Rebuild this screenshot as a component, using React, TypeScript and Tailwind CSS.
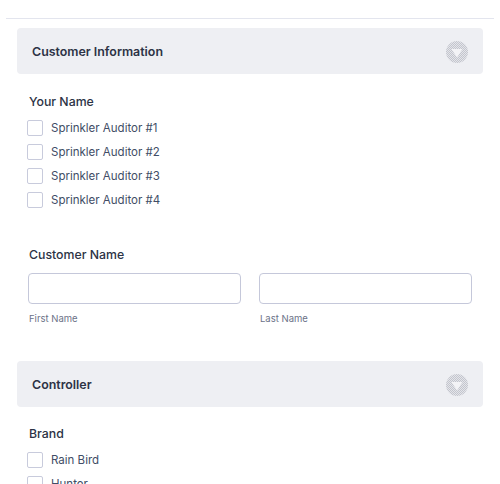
import { useState } from 'react';

function CollapseIcon() {
  return (
    <svg width="22" height="22" viewBox="0 0 22 22" className="shrink-0">
      <defs>
        <pattern id="dots" width="2" height="2" patternUnits="userSpaceOnUse">
          <rect width="2" height="2" fill="#e4e5ea" />
          <rect width="1" height="1" fill="#c3c5cd" />
          <rect x="1" y="1" width="1" height="1" fill="#c3c5cd" />
        </pattern>
      </defs>
      <circle cx="11" cy="11" r="11" fill="url(#dots)" />
      <path d="M5.5 8h11L11 16.5z" fill="#f3f3f6" />
    </svg>
  );
}

function SectionHeader({ title }: { title: string }) {
  return (
    <div className="flex h-[46px] items-center justify-between rounded-[4px] bg-[#eeeff3] pl-[15px] pr-[15px] pt-[2px]">
      <span className="text-[12.4px] font-semibold text-[#2c3345]">{title}</span>
      <CollapseIcon />
    </div>
  );
}

function CheckRow({ label }: { label: string }) {
  const [checked, setChecked] = useState(false);
  return (
    <label className="flex h-6 items-center gap-[8px]">
      <input
        type="checkbox"
        checked={checked}
        onChange={() => setChecked(!checked)}
        className="h-[16px] w-[16px] appearance-none rounded-[2px] border border-[#c8cbdc] bg-white"
      />
      <span className="pt-px text-[11.5px] text-[#414d66]">{label}</span>
    </label>
  );
}

function NameField({ label }: { label: string }) {
  return (
    <div className="flex-1">
      <input
        type="text"
        className="block h-[31px] w-full rounded-[4px] border border-[#c5c8da] bg-white"
      />
      <div className="mt-[8px] pl-[1px] text-[9.5px] leading-[14px] text-[#6b7288]">{label}</div>
    </div>
  );
}

export default function App() {
  return (
    <div className="h-[484px] w-[500px] overflow-hidden bg-white font-['Inter',sans-serif]">
      <div className="mx-[6px] h-[19px] border-b border-[#e3e5ee]" />

      <div className="mx-[17px] mt-[9px]">
        <SectionHeader title="Customer Information" />
      </div>

      {/* Your Name */}
      <div className="mt-[17px] pl-[27px]">
        <div className="pl-[2px] pt-px text-[12.3px] font-[450] leading-5 text-[#2c3345]">Your Name</div>
        <div className="mt-[4px]">
          <CheckRow label="Sprinkler Auditor #1" />
          <CheckRow label="Sprinkler Auditor #2" />
          <CheckRow label="Sprinkler Auditor #3" />
          <CheckRow label="Sprinkler Auditor #4" />
        </div>
      </div>

      {/* Customer Name */}
      <div className="mt-[33px] px-[28px]">
        <div className="pl-[1px] text-[12.3px] font-[450] leading-5 text-[#2c3345]">Customer Name</div>
        <div className="mt-[8px] flex gap-[18px]">
          <NameField label="First Name" />
          <NameField label="Last Name" />
        </div>
      </div>

      <div className="mx-[17px] mt-[35px]">
        <SectionHeader title="Controller" />
      </div>

      {/* Brand */}
      <div className="mt-[16px] pl-[27px]">
        <div className="pl-[2px] pt-px text-[12.3px] font-[450] leading-5 text-[#2c3345]">Brand</div>
        <div className="mt-[4px]">
          <CheckRow label="Rain Bird" />
          <CheckRow label="Hunter" />
        </div>
      </div>
    </div>
  );
}
